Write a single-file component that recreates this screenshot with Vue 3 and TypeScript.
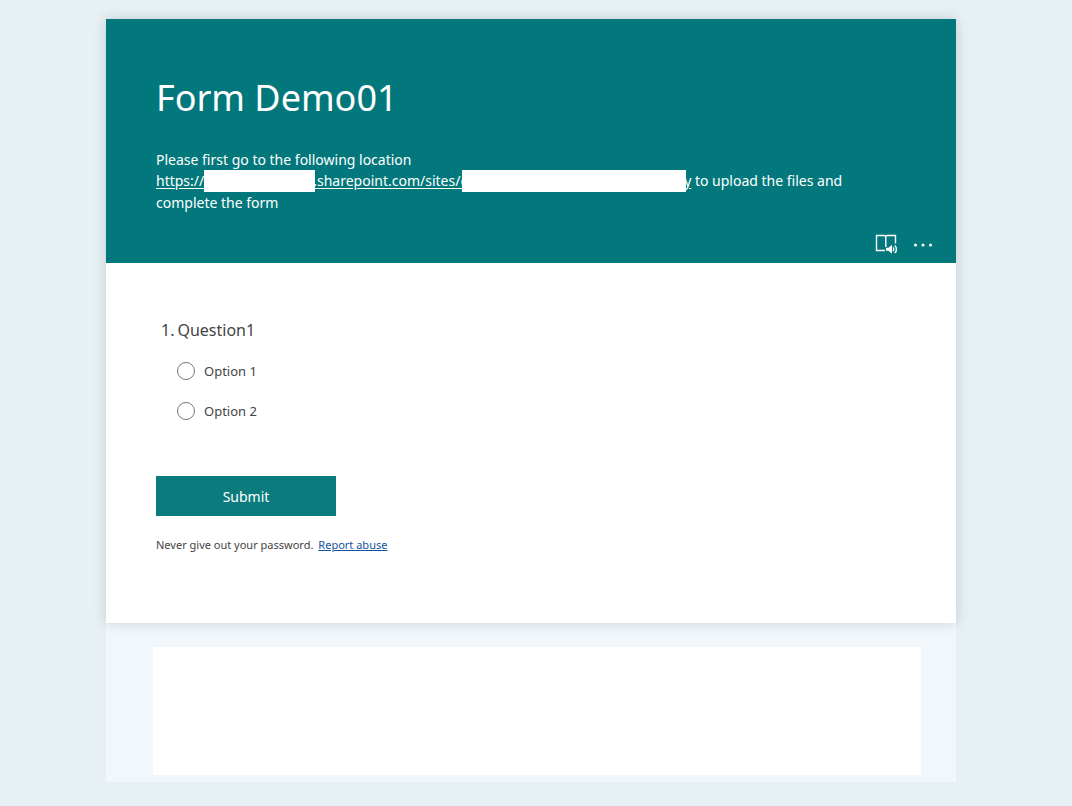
<script setup lang="ts">
import { ref } from 'vue'

const options: string[] = ['Option 1', 'Option 2']
const answer = ref<string>('')
</script>

<template>
  <div class="page">
    <main class="form-column">
      <form class="card" @submit.prevent>
        <header class="banner">
          <h1 class="title">Form Demo01</h1>
          <p class="description">
            Please first go to the following location<br />
            <a class="site-link" href="#">https://<span class="redacted host"></span>.sharepoint.com/sites/c<span class="redacted path"></span>y</a>
            to upload the files and complete the form
          </p>
          <div class="tools">
            <button class="tool" type="button" aria-label="Immersive reader">
              <svg width="24" height="22" viewBox="0 0 24 22" fill="none" stroke="#fff" stroke-width="1.4">
                <path d="M10 17.500H1.500V2.500H9.500L10.800 3.500L12 2.500H20.500V10.500M10.800 3.500V14" />
                <path d="M11 14.800h2.500l3.500-3v9l-3.500-3H11z" fill="#fff" stroke="none" />
                <path d="M18 14.500a2.500 2.500 0 0 1 0 3.600M19.800 12.500a5.200 5.200 0 0 1 0 7.600" />
              </svg>
            </button>
            <button class="tool" type="button" aria-label="More options">
              <svg width="20" height="22" viewBox="0 0 20 22" fill="#fff">
                <circle cx="2.500" cy="12" r="1.500" />
                <circle cx="10" cy="12" r="1.500" />
                <circle cx="17.500" cy="12" r="1.500" />
              </svg>
            </button>
          </div>
        </header>

        <section class="body">
          <fieldset class="question">
            <legend class="question-title"><span class="number">1.</span>Question1</legend>
            <label v-for="option in options" :key="option" class="option">
              <input v-model="answer" class="radio" type="radio" name="question1" :value="option" />
              <span>{{ option }}</span>
            </label>
          </fieldset>
          <button class="submit" type="submit">Submit</button>
          <p class="notice">Never give out your password.<a class="report" href="#">Report abuse</a></p>
        </section>
      </form>

      <footer class="footer">
        <div class="footer-panel"></div>
      </footer>
    </main>
  </div>
</template>

<style>
body {
  background: #e7f0f3;
}
</style>

<style scoped>
.page {
  box-sizing: border-box;
  min-height: 100vh;
  padding: 19px 10px 24px 0;
  font-family: "Segoe UI", "Noto Sans", "Open Sans", sans-serif;
  color: #444;
}

.form-column {
  max-width: 850px;
  margin: 0 auto;
}

.card {
  position: relative;
  background: #fff;
  box-shadow: 0 0 12px rgba(0, 50, 60, 0.17);
}

.banner {
  padding: 52px 20px 8px 50px;
  background: #03787c;
  color: #fff;
}

.title {
  margin: 0;
  font-size: 36px;
  line-height: 54px;
  font-weight: 400;
}

.description {
  max-width: 720px;
  margin: 24px 0 20px;
  font-size: 14px;
  line-height: 21px;
}

.site-link {
  color: #fff;
  text-underline-offset: 2px;
}

.redacted {
  display: inline-block;
  position: relative;
  height: 22px;
  margin: 0 -2px 0 0;
  vertical-align: top;
  background: #fff;
}

.host {
  width: 111px;
}

.path {
  width: 224px;
  margin: 0 -2px 0 -5px;
}

.tools {
  display: flex;
  justify-content: flex-end;
  gap: 14px;
  padding-right: 3px;
}

.tool {
  display: flex;
  padding: 0;
  border: 0;
  background: none;
  cursor: pointer;
}

.body {
  padding: 54px 50px 69px;
}

.question {
  min-width: 0;
  margin: 0;
  padding: 0 5px;
  border: 0;
}

.question-title {
  padding: 0;
  font-size: 16px;
  line-height: 26px;
}

.number {
  margin-right: 3px;
}

.option {
  display: flex;
  align-items: center;
  gap: 9px;
  width: fit-content;
  height: 20px;
  margin: 18px 0 0 16px;
  font-size: 13px;
  line-height: 20px;
}

.option + .option {
  margin-top: 20px;
}

.radio {
  appearance: none;
  width: 18px;
  height: 18px;
  margin: 0;
  border: 1px solid #777;
  border-radius: 50%;
  background: #fff;
}

.radio:checked {
  border: 5px solid #03787c;
}

.submit {
  display: block;
  width: 180px;
  height: 40px;
  margin-top: 55px;
  padding: 0;
  border: 0;
  background: #0b7b7e;
  color: #fff;
  font-family: inherit;
  font-size: 14px;
  cursor: pointer;
}

.notice {
  margin: 20px 0 0;
  font-size: 11px;
  line-height: 18px;
}

.report {
  margin-left: 5px;
  color: #14539f;
}

.footer {
  padding: 24px 35px 7px 47px;
  background: #f1f7fa;
}

.footer-panel {
  height: 128px;
  background: #fff;
}
</style>
